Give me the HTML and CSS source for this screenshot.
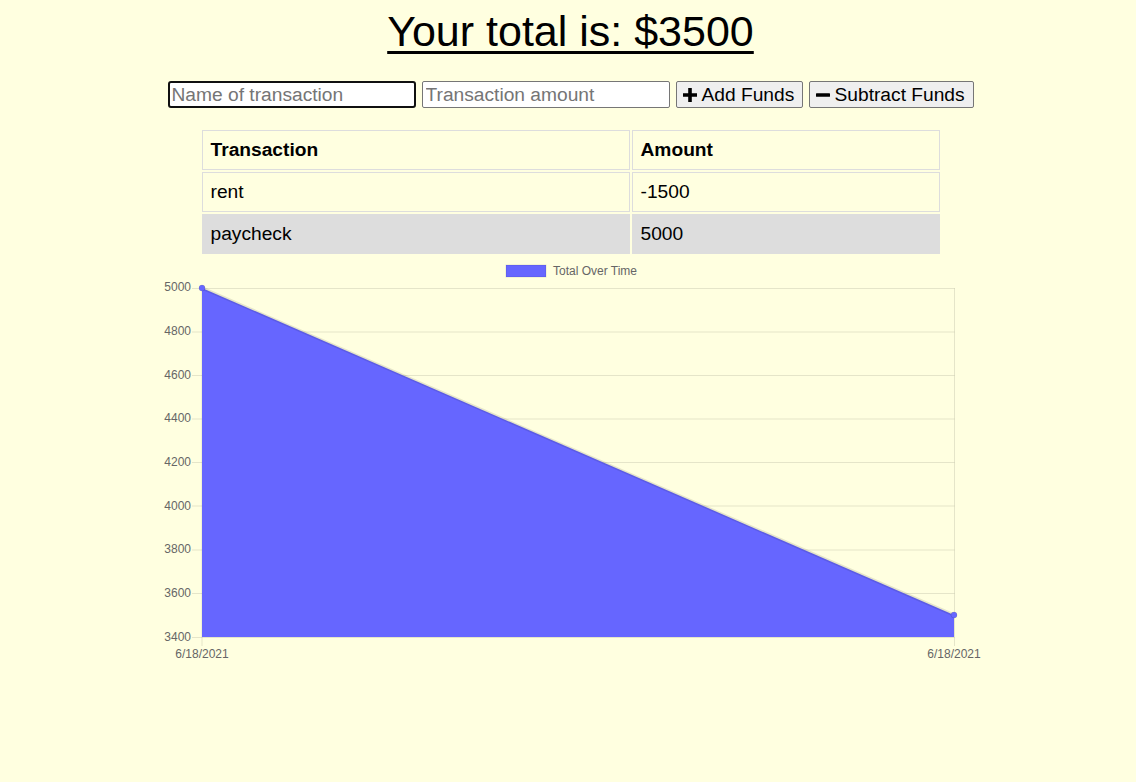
FILE: index.html
```html
<!DOCTYPE html>
<html lang="en">
<head>
<meta charset="utf-8">
<title>Budget Tracker</title>
<link rel="stylesheet" href="styles.css">
</head>
<body>
<h1 class="total">Your total is: $3500</h1>

<div class="form">
  <input type="text" class="field focused" placeholder="Name of transaction">
  <input type="number" class="field" placeholder="Transaction amount">
  <button class="btn btn-add">
    <svg class="ico" viewBox="0 0 14 14" width="14" height="14"><path d="M5.2 0h3.6v5.2H14v3.6H8.8V14H5.2V8.8H0V5.2h5.2z" fill="#000"/></svg>
    Add Funds
  </button>
  <button class="btn btn-sub">
    <svg class="ico" viewBox="0 0 14 14" width="14" height="14"><rect x="0" y="5.2" width="14" height="3.6" rx="0.6" fill="#000"/></svg>
    Subtract Funds
  </button>
</div>

<table class="tx">
  <colgroup><col class="c1"><col class="c2"></colgroup>
  <thead>
    <tr><th>Transaction</th><th>Amount</th></tr>
  </thead>
  <tbody>
    <tr><td>rent</td><td>-1500</td></tr>
    <tr class="alt"><td>paycheck</td><td>5000</td></tr>
  </tbody>
</table>

<svg class="chart" width="841" height="412" viewBox="150 258 841 412">
  <g class="grid" stroke="rgba(0,0,0,0.1)" stroke-width="1" fill="none">
    <path d="M192 288.5H954.5"/>
    <path d="M192 332H954.5"/>
    <path d="M192 375.5H954.5"/>
    <path d="M192 419H954.5"/>
    <path d="M192 462.5H954.5"/>
    <path d="M192 506H954.5"/>
    <path d="M192 550H954.5"/>
    <path d="M192 593.5H954.5"/>
    <path d="M192 637.5H954.5"/>
    <path d="M202 288V646"/>
    <path d="M954.5 288V646"/>
  </g>
  <polygon points="202,288 954,615 954,637 202,637" fill="#6666ff"/>
  <path d="M202 288L954 615" stroke="rgba(0,0,0,0.1)" stroke-width="3" fill="none"/>
  <circle cx="202" cy="288" r="3" fill="#6666ff" stroke="rgba(0,0,0,0.1)" stroke-width="1"/>
  <circle cx="954" cy="615" r="3" fill="#6666ff" stroke="rgba(0,0,0,0.1)" stroke-width="1"/>

  <rect x="506" y="265" width="40" height="12" fill="#6666ff" stroke="rgba(0,0,0,0.1)" stroke-width="1"/>
  <text class="lbl" x="553" y="275">Total Over Time</text>

  <g class="lbl" text-anchor="end">
    <text x="191" y="291">5000</text>
    <text x="191" y="335">4800</text>
    <text x="191" y="379">4600</text>
    <text x="191" y="422">4400</text>
    <text x="191" y="466">4200</text>
    <text x="191" y="510">4000</text>
    <text x="191" y="553">3800</text>
    <text x="191" y="597">3600</text>
    <text x="191" y="641">3400</text>
  </g>
  <g class="lbl" text-anchor="middle">
    <text x="202" y="658">6/18/2021</text>
    <text x="954" y="658">6/18/2021</text>
  </g>
</svg>
</body>
</html>
```

FILE: styles.css
```css
html, body {
  background: #ffffe0;
}
body {
  margin: 0;
  padding: 7px 0 0 5px;
  font-family: "Liberation Sans", Arial, sans-serif;
  color: #000;
}
.total {
  margin: 0;
  font-size: 43px;
  line-height: 49px;
  font-weight: normal;
  text-align: center;
  text-decoration: underline;
  text-decoration-thickness: 3px;
  text-underline-offset: 5px;
  text-decoration-skip-ink: auto;
}
.form {
  display: flex;
  justify-content: center;
  gap: 6px;
  margin-top: 25px;
}
.field {
  box-sizing: border-box;
  width: 248px;
  height: 27px;
  margin: 0;
  padding: 1px 3px;
  font-family: "Liberation Sans", Arial, sans-serif;
  font-size: 19.2px;
  background: #fff;
  border: 1px solid #767676;
  border-radius: 2px;
  color: #000;
}
.field::placeholder {
  color: #757575;
}
.field.focused {
  border: 2px solid #101010;
  border-radius: 3px;
  padding: 0 2px;
}
.btn {
  box-sizing: border-box;
  height: 27px;
  margin: 0;
  padding: 0 6px;
  display: inline-flex;
  align-items: center;
  gap: 5px;
  font-family: "Liberation Sans", Arial, sans-serif;
  font-size: 19.2px;
  color: #000;
  background: #efefef;
  border: 1px solid #767676;
  border-radius: 2px;
}
.btn-add { width: 127px; }
.btn-sub { width: 165px; }
.ico { display: block; flex: none; }
.tx {
  width: 741px;
  margin: 20px auto 0;
  border-spacing: 2px;
  table-layout: fixed;
  font-size: 19.2px;
}
.c1 { width: 428px; }
.c2 { width: 308px; }
.tx th, .tx td {
  border: 1px solid #ddd;
  padding: 8px;
  line-height: 22px;
  text-align: left;
}
.tx th { font-weight: bold; }
.tx tr.alt td { background: #dddddd; }
.chart {
  display: block;
  margin: 2px auto 0;
}
.lbl {
  font-family: "Liberation Sans", Arial, sans-serif;
  font-size: 12px;
  fill: #666;
}
```
